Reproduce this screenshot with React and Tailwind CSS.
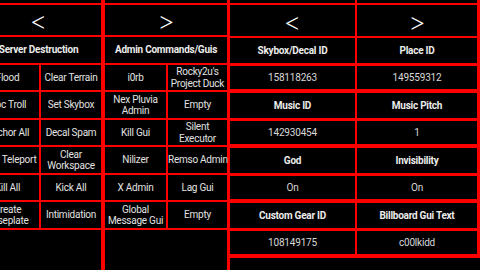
import clsx from "clsx";

const font = { fontFamily: "Roboto, 'Noto Sans', sans-serif" };

const colA = [
  ["Flood", "Clear Terrain"],
  ["Noc Troll", "Set Skybox"],
  ["Anchor All", "Decal Spam"],
  ["Base Teleport", ["Clear", "Workspace"]],
  ["Kill All", "Kick All"],
  [["Create", "Baseplate"], "Intimidation"],
];

const colB = [
  ["i0rb", ["Rocky2u's", "Project Duck"]],
  [["Nex Pluvia", "Admin"], "Empty"],
  ["Kill Gui", ["Silent", "Executor"]],
  ["Nilizer", "Remso Admin"],
  ["X Admin", "Lag Gui"],
  [["Global", "Message Gui"], "Empty"],
];

const colC = [
  ["Skybox/Decal ID", "158118263"],
  ["Music ID", "142930454"],
  ["God", "On"],
  ["Custom Gear ID", "108149175"],
];

const colD = [
  ["Place ID", "149559312"],
  ["Music Pitch", "1"],
  ["Invisibility", "On"],
  ["Billboard Gui Text", "c00lkidd"],
];

const rowH = ["h-[27px]", "h-[28px]", "h-[27px]", "h-[28px]", "h-[27px]", "h-[28px]"];

function Label({ text }) {
  if (Array.isArray(text)) {
    return (
      <span>
        {text[0]}
        <br />
        {text[1]}
      </span>
    );
  }
  return <span className="whitespace-nowrap">{text}</span>;
}

function Cell({ children, className }) {
  return (
    <div
      className={clsx(
        "flex items-center justify-center text-center leading-[1.15] border-[#ff0000]",
        className
      )}
    >
      {children}
    </div>
  );
}

function Arrow({ children }) {
  return (
    <span className="font-['Lato',sans-serif] text-[31px] font-light leading-none text-white mt-[3px]">
      {children}
    </span>
  );
}

function LeftCol({ arrow, title, rows, className, subW }) {
  return (
    <div className={clsx("h-full shrink-0 border-[#ff0000] pt-[3px]", className)}>
      <div className="border-t-2 border-[#ff0000]">
        <Cell className="h-[32px] border-b-2">
          <Arrow>{arrow}</Arrow>
        </Cell>
        <Cell className="h-[28px] border-b-2 text-[10px] font-bold tracking-[-0.25px] text-[#ececec]">
          <span className="whitespace-nowrap">{title}</span>
        </Cell>
        {rows.map((r, i) => (
          <div key={i} className={clsx("flex border-b-2 border-[#ff0000]", rowH[i])}>
            <Cell
              className={clsx(
                "h-full shrink-0 border-r-2 text-[10px] tracking-[-0.25px] text-[#e2e2e2]",
                subW
              )}
            >
              <Label text={r[0]} />
            </Cell>
            <Cell className="h-full flex-1 text-[10px] tracking-[-0.25px] text-[#e2e2e2]">
              <Label text={r[1]} />
            </Cell>
          </div>
        ))}
      </div>
    </div>
  );
}

function RightCol({ arrow, pairs, className }) {
  return (
    <div className={clsx("h-[258px] shrink-0 border-[#ff0000] pt-[3px]", className)}>
      <div className="border-t-2 border-[#ff0000]">
        <Cell className="h-[33px] border-b-2">
          <Arrow>{arrow}</Arrow>
        </Cell>
        {pairs.map(([k, v]) => (
          <div key={k}>
            <Cell className="h-[28px] border-b-[3px] text-[10px] font-bold tracking-[-0.25px] text-[#ececec]">
              <span className="whitespace-nowrap">{k}</span>
            </Cell>
            <Cell className="h-[27px] border-b-4 text-[10px] tracking-[-0.2px] text-[#d8d8d8]">
              {v}
            </Cell>
          </div>
        ))}
      </div>
    </div>
  );
}

export default function App() {
  return (
    <div className="flex h-[270px] w-[480px] overflow-hidden bg-black" style={font}>
      <LeftCol
        arrow="<"
        title="Server Destruction"
        rows={colA}
        className="ml-[-24px] w-[127px] border-r-2"
        subW="w-[65px]"
      />
      <LeftCol
        arrow=">"
        title="Admin Commands/Guis"
        rows={colB}
        className="w-[127px] border-l-2 border-r-[3px]"
        subW="w-[63px]"
      />
      <RightCol arrow="<" pairs={colC} className="w-[127px] border-r-2" />
      <RightCol arrow=">" pairs={colD} className="w-[123px] border-r-[3px]" />
    </div>
  );
}
